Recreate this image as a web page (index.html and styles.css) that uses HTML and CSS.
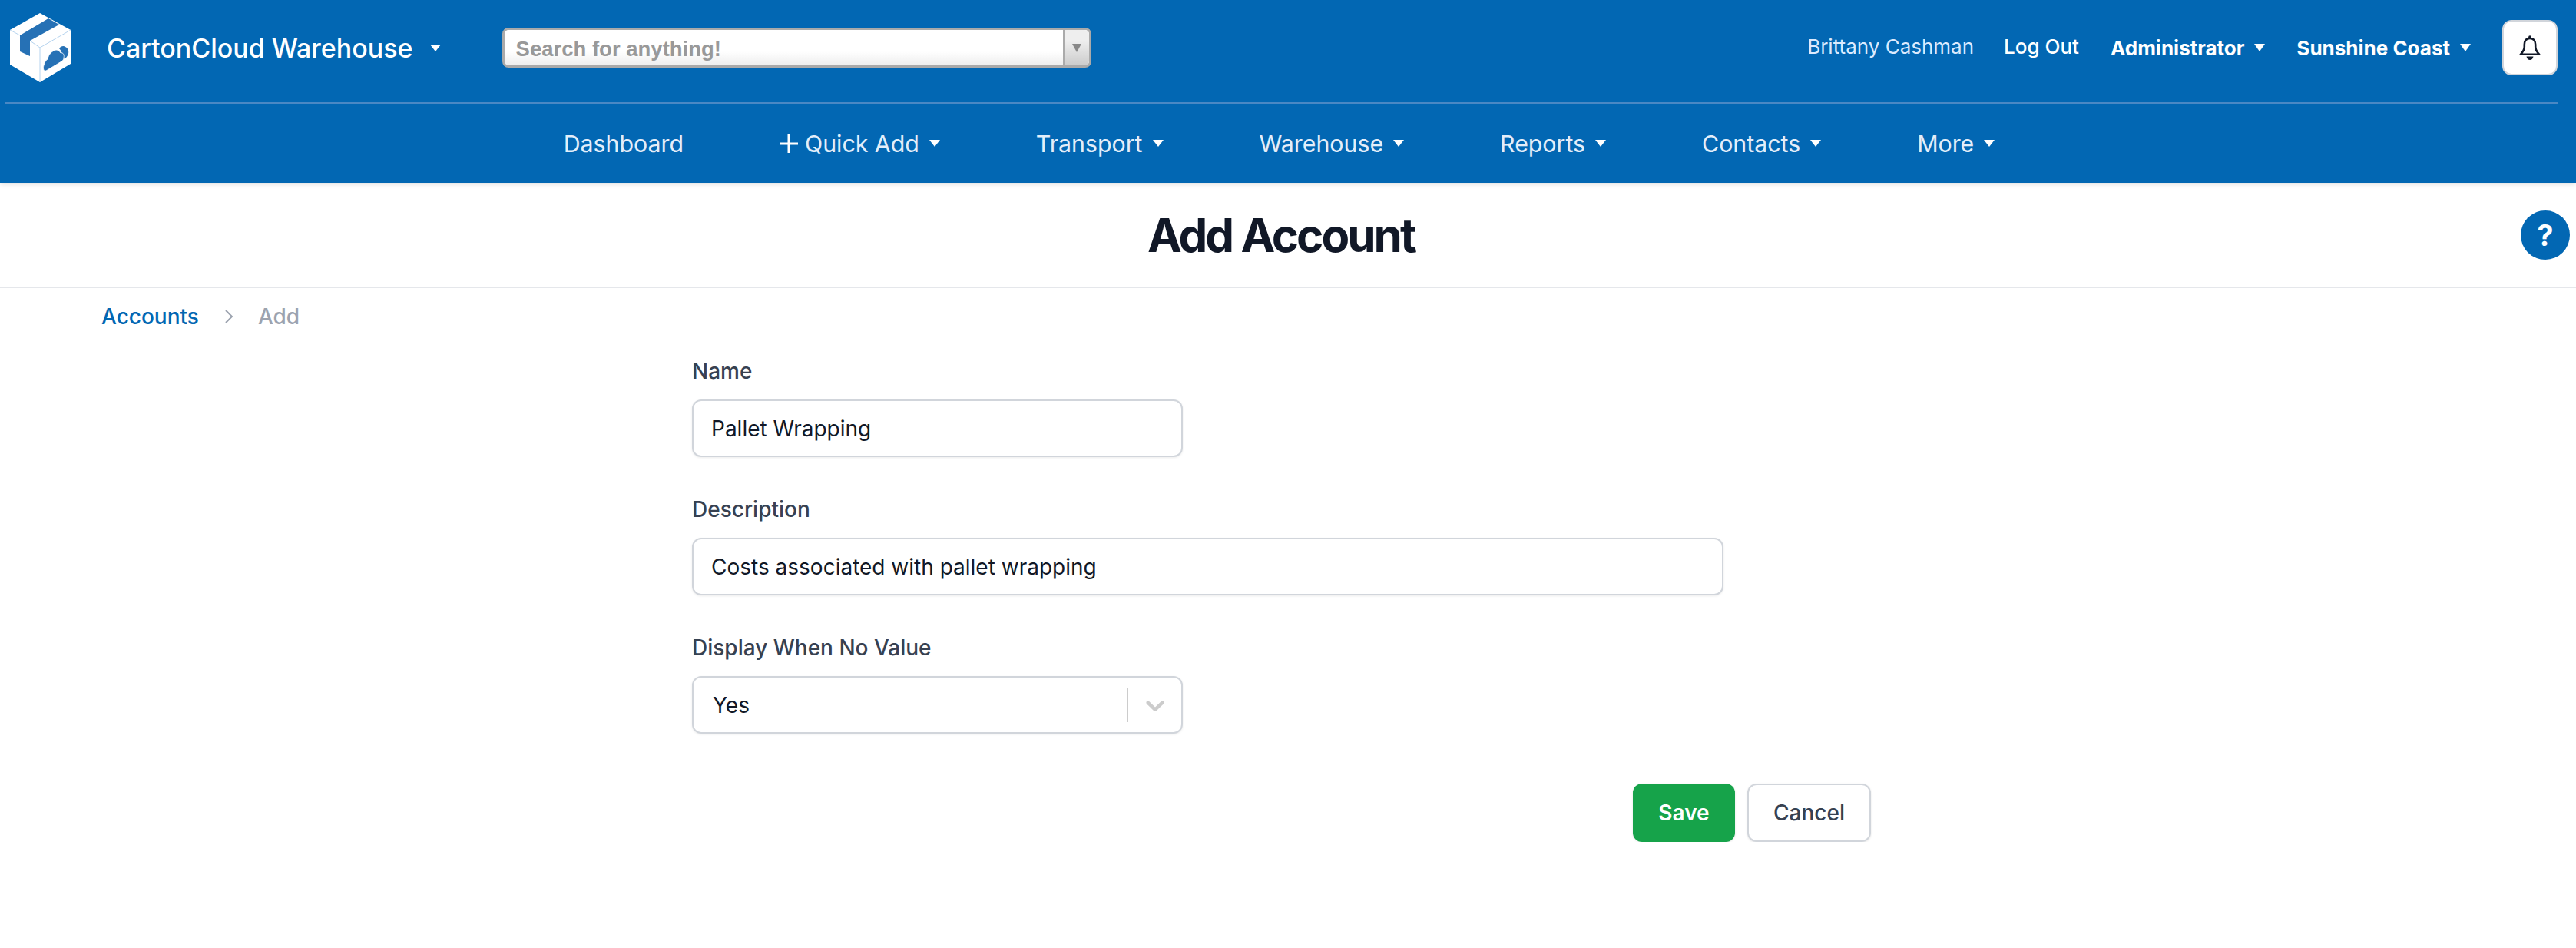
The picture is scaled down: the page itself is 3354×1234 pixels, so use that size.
FILE: index.html
```html
<!DOCTYPE html>
<html lang="en">
<head>
<meta charset="utf-8">
<title>Add Account</title>
<link rel="stylesheet" href="styles.css">
</head>
<body>
<header class="header">
  <div class="top-row">
    <svg class="logo" viewBox="13 17 79 90" width="79" height="90" aria-hidden="true">
      <path fill="#fff" d="M52 17 92 39V83L52 107 13 84V39Z"/>
      <path fill="#2671b5" d="M63 24 77 32 39 53V73L26 67V46Z"/>
      <path fill="none" stroke="#b5d3ee" stroke-width="1" d="M13 39 26 46M39 53 52 62 92 39M52 62V107"/>
      <path fill="#2671b5" d="M77 63C79 60 83 59 85 61 88 62 90 66 89 70 88 73 86 75 84 77 82 72 80 66 77 63Z"/>
      <path fill="#2671b5" stroke="#fff" stroke-width=".8" d="M60 92C56 93 56 88 57 85 58 81 60 78 62 77 63 71 68 66 73 65 76 65 78 67 79 69 82 68 84 71 83 75 83 77 82 79 80 80Z"/>
    </svg>
    <a class="brand">CartonCloud Warehouse<span class="caret brand-caret"></span></a>
    <div class="search">
      <span class="search-text">Search for anything!</span>
      <span class="search-arrow"><span class="search-tri"></span></span>
    </div>
    <div class="top-right">
      <span class="user">Brittany Cashman</span>
      <a class="logout">Log Out</a>
      <a class="top-menu">Administrator<span class="caret top-caret"></span></a>
      <a class="top-menu">Sunshine Coast<span class="caret top-caret"></span></a>
      <button class="bell" type="button" aria-label="Notifications">
        <svg viewBox="0 0 28 33" width="28" height="33" aria-hidden="true">
          <circle cx="14" cy="2.2" r="1.9" fill="#111827"/>
          <path fill="none" stroke="#111827" stroke-width="2.6" stroke-linejoin="round" d="M14 4C9 4 6.800 7.500 6.800 12V15C6.800 19.500 4.500 22 1.800 24.800H26.200C23.500 22 21.200 19.500 21.200 15V12C21.200 7.500 19 4 14 4Z"/>
          <path fill="#111827" d="M9.500 27.500H18.500C18 30.500 16 32 14 32S10 30.500 9.500 27.500Z"/>
        </svg>
      </button>
    </div>
  </div>
  <nav class="main-nav">
    <a class="nav-link">Dashboard</a>
    <a class="nav-link"><svg class="plus" viewBox="0 0 24 24" width="24" height="24" aria-hidden="true"><path fill="none" stroke="#fff" stroke-width="3" d="M12 0V24M0 12H24"/></svg>Quick Add<span class="caret nav-caret"></span></a>
    <a class="nav-link">Transport<span class="caret nav-caret"></span></a>
    <a class="nav-link">Warehouse<span class="caret nav-caret"></span></a>
    <a class="nav-link">Reports<span class="caret nav-caret"></span></a>
    <a class="nav-link">Contacts<span class="caret nav-caret"></span></a>
    <a class="nav-link">More<span class="caret nav-caret"></span></a>
  </nav>
</header>
<section class="title-bar">
  <h1 class="page-title">Add Account</h1>
  <button class="help" type="button">?</button>
</section>
<div class="breadcrumb">
  <a class="crumb-link">Accounts</a>
  <svg class="crumb-sep" viewBox="0 0 12 20" width="12" height="20" aria-hidden="true"><path fill="none" stroke="#9ca3af" stroke-width="2" d="M2 2l8 8-8 8"/></svg>
  <span class="crumb-current">Add</span>
</div>
<main class="form">
  <div class="field">
    <div class="label">Name</div>
    <div class="input input-short">Pallet Wrapping</div>
  </div>
  <div class="field">
    <div class="label">Description</div>
    <div class="input input-long">Costs associated with pallet wrapping</div>
  </div>
  <div class="field">
    <div class="label">Display When No Value</div>
    <div class="input input-short select">
      <span class="select-value">Yes</span>
      <span class="select-sep"></span>
      <svg class="select-chevron" viewBox="0 0 20 20" width="40" height="40" aria-hidden="true"><path fill="#ccc" d="M4.516 7.548c0.436-0.446 1.043-0.481 1.576 0l3.908 3.747 3.908-3.747c0.533-0.481 1.141-0.446 1.574 0 0.436 0.445 0.408 1.197 0 1.615-0.406 0.418-4.695 4.502-4.695 4.502-0.217 0.223-0.502 0.335-0.787 0.335s-0.57-0.112-0.789-0.335c0 0-4.287-4.084-4.695-4.502s-0.436-1.17 0-1.615z"/></svg>
    </div>
  </div>
  <div class="actions">
    <button class="btn btn-save" type="button">Save</button>
    <button class="btn btn-cancel" type="button">Cancel</button>
  </div>
</main>
</body>
</html>
```
FILE: styles.css
```css
* { box-sizing: border-box; }
html, body { margin: 0; padding: 0; background: #fff; }
body { font-family: Inter, "Liberation Sans", sans-serif; color: #111827; font-size: 28px; }

.header { background: #0267b3; height: 238px; box-shadow: 0 2px 6px rgba(0,0,0,.12); }
.top-row { height: 133px; margin: 0 24px 0 6px; padding: 0 0 9px 7px; display: flex; align-items: center; }
.logo { flex: none; }
.brand { margin-left: 47px; color: #fff; font-size: 34px; font-weight: 500; white-space: nowrap; display: flex; align-items: center; }
.caret { display: inline-block; width: 0; height: 0; border-left: 7.5px solid transparent; border-right: 7.5px solid transparent; border-top: 9px solid #fff; margin-left: 13px; }
.brand-caret { margin-left: 22px; }
.top-caret { margin-left: 13px; border-top-width: 10px; }
.search { margin-left: 80px; width: 767px; height: 52px; border: 3px solid #aaa; border-radius: 8px; background: linear-gradient(#fff 60%, #eee); display: flex; align-items: center; justify-content: space-between; font-family: "Liberation Sans", sans-serif; font-weight: 700; font-size: 27.5px; color: #999; }
.search-text { padding: 4px 0 0 15px; }
.search-arrow { width: 34px; height: 100%; border-left: 2px solid #aaa; background: linear-gradient(#eee 30%, #ccc); display: flex; align-items: center; justify-content: center; border-radius: 0 6px 6px 0; }
.search-tri { width: 0; height: 0; border-left: 6px solid transparent; border-right: 6px solid transparent; border-top: 11px solid #888; }
.top-right { margin-left: auto; display: flex; align-items: center; white-space: nowrap; font-size: 26px; }
.user { color: #dbeafe; padding-bottom: 4px; }
.logout { margin-left: 39px; color: #fff; font-weight: 500; padding-bottom: 4px; }
.top-menu { margin-left: 41px; color: #fff; font-weight: 700; display: flex; align-items: center; }
.bell { margin-left: 41px; width: 72px; height: 72px; background: #fff; border: 2px solid #d1d5db; border-radius: 12px; padding: 0; display: flex; align-items: center; justify-content: center; }

.main-nav { height: 105px; margin: 0 24px 0 6px; border-top: 2px solid #4a88c4; display: flex; align-items: center; justify-content: center; gap: 125px; padding-right: 5px; }
.nav-link { color: #e3eefa; font-size: 30.3px; font-weight: 400; white-space: nowrap; display: flex; align-items: center; }
.plus { flex: none; margin-right: 9px; }
.nav-caret { margin-left: 13px; }

.title-bar { height: 137px; padding-left: 54px; padding-right: 8px; border-bottom: 2px solid #e5e7eb; display: flex; align-items: center; }
.page-title { flex: 1; margin: 0; text-align: center; font-size: 60px; font-weight: 700; color: #111827; letter-spacing: -3px; }
.help { width: 64px; height: 64px; border: 0; border-radius: 50%; background: #0267b3; color: #fff; font: 700 38px Inter, sans-serif; padding: 0; }

.breadcrumb { display: flex; align-items: center; height: 36px; margin-top: 19px; padding-left: 132px; font-size: 28px; }
.crumb-link { color: #0267b3; font-weight: 500; }
.crumb-sep { margin: 0 32px 0 33px; }
.crumb-current { color: #9ca3af; font-weight: 500; }

.form { width: 1535px; margin-left: 901px; padding-top: 36px; }
.field { margin-bottom: 51px; }
.label { font-size: 28px; font-weight: 500; color: #374151; line-height: 34px; margin-bottom: 20px; }
.input { height: 75px; border: 2px solid #d1d5db; border-radius: 12px; box-shadow: 0 1px 3px rgba(0,0,0,.08); padding: 0 23px; display: flex; align-items: center; font-size: 28px; color: #111827; background: #fff; }
.input-short { width: 639px; }
.input-long { width: 1343px; }
.select { padding-right: 14px; }
.select-value { flex: 1; padding-left: 2px; }
.select-sep { width: 2px; height: 44px; background: #ccc; margin-right: 15px; }
.select-chevron { flex: none; }

.actions { display: flex; justify-content: flex-end; gap: 16px; margin-top: 65px; }
.btn { height: 76px; border-radius: 12px; font: 600 28px Inter, sans-serif; padding: 0; box-shadow: 0 1px 3px rgba(0,0,0,.1); }
.btn-save { width: 133px; background: #16a34a; border: 0; color: #fff; }
.btn-cancel { width: 161px; background: #fff; border: 2px solid #d1d5db; color: #374151; font-weight: 500; }
```
